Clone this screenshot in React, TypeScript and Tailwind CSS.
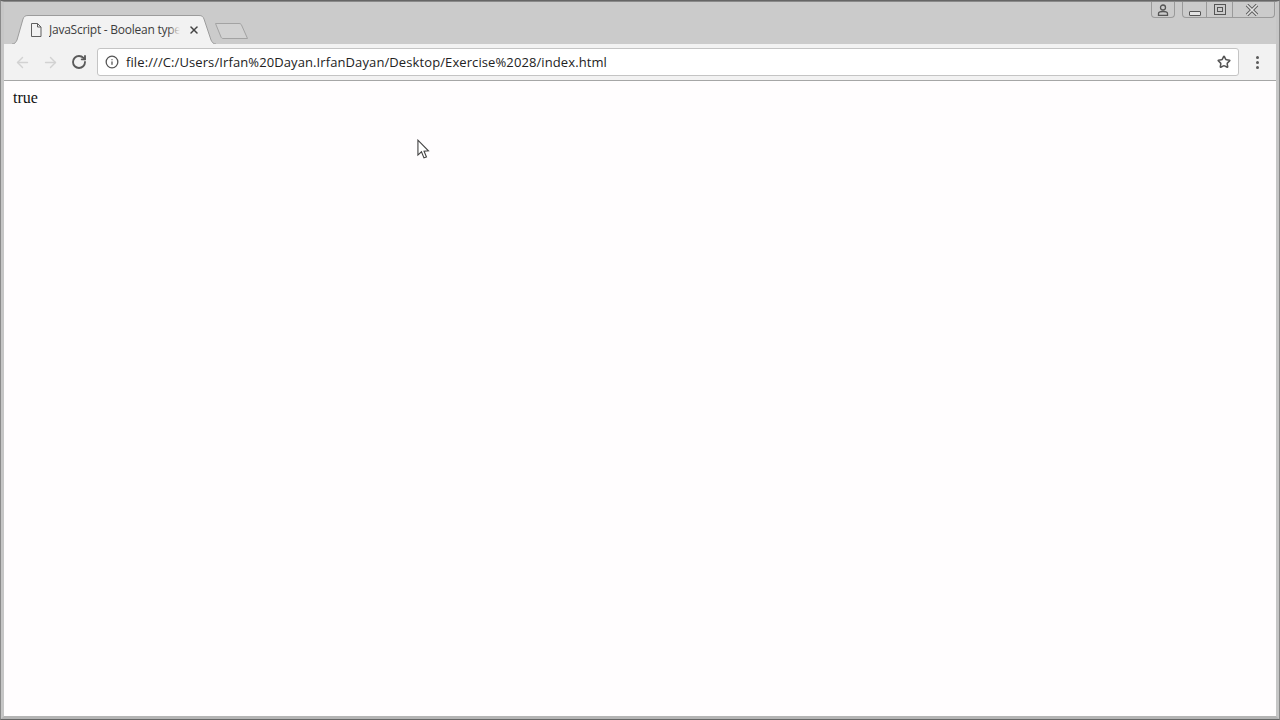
import { ArrowLeft, ArrowRight, RotateCw, Info, Star, X } from "lucide-react";

const uiFont = "font-['Open_Sans','Liberation_Sans',sans-serif]";

function Tab() {
  return (
    <div className="relative flex h-[29px] w-[204px] shrink-0 items-center pl-[18px]">
      <svg className="absolute inset-0" width="204" height="29" viewBox="0 0 204 29" fill="none">
        <path d="M0 29 C3 29 4 27 5 25 L11 4 C12 1.500 13 0.500 16 0.500 L187 0.500 C190 0.500 191 1.500 192 4 L199 25 C200 27 201 29 204 29 Z" fill="#f2f2f2" />
        <path d="M0 29 C3 29 4 27 5 25 L11 4 C12 1.500 13 0.500 16 0.500 L187 0.500 C190 0.500 191 1.500 192 4 L199 25 C200 27 201 29 204 29" stroke="#9c9c9c" />
      </svg>
      <svg className="relative shrink-0" width="12" height="14" viewBox="0 0 12 14" fill="none" stroke="#5f5f5f">
        <path d="M1.500 0.500 H7.500 L11 4 V13.500 H1.500 Z M7.500 0.500 V4 H11" />
      </svg>
      <div className={`relative ml-[7px] w-[131px] overflow-hidden whitespace-nowrap text-[12px] leading-[14px] tracking-[-0.25px] text-[#3c3c3c] ${uiFont}`}>
        JavaScript - Boolean type
        <div className="absolute inset-y-0 right-0 w-3 bg-gradient-to-r from-transparent to-[#f2f2f2]" />
      </div>
      <X className="relative ml-[8px] text-[#444444]" size={12} strokeWidth={3} />
    </div>
  );
}

function NewTabButton() {
  return (
    <svg className="mb-[4px] ml-[-2px] shrink-0" width="36" height="18" viewBox="0 0 36 18" fill="none">
      <path d="M1.500 1.500 L25 1.500 C26.500 1.500 27 2 27.500 3 L33.500 16.500 L9 16.500 C8 16.500 7.500 16 7 15 Z" fill="#d2d2d2" stroke="#a3a3a3" />
    </svg>
  );
}

function CloseGlyph() {
  return (
    <svg width="14" height="12" viewBox="0 0 14 12" fill="none">
      <path d="M2 1 L12 11 M12 1 L2 11" stroke="#5a5a5a" strokeWidth="3.400" />
      <path d="M2 1 L12 11 M12 1 L2 11" stroke="#e2e2e2" strokeWidth="1.600" />
    </svg>
  );
}

function WindowControls() {
  return (
    <div className="ml-auto flex items-start self-start">
      <div className="mr-[7px] flex h-[16px] w-[24px] items-center justify-center rounded-b-[4px] border-x border-b border-[#9a9a9a]">
        <svg width="12" height="12" viewBox="0 0 12 12" fill="none" stroke="#555555" strokeWidth="1.300">
          <circle cx="6" cy="3.500" r="2.500" />
          <path d="M1.500 11.300 V9.500 C1.500 8.200 3 7.500 6 7.500 C9 7.500 10.500 8.200 10.500 9.500 V11.300 Z" />
        </svg>
      </div>
      <div className="flex h-[16px] rounded-b-[4px] border-x border-b border-[#9a9a9a]">
        <div className="flex w-[24px] items-end justify-center border-r border-[#9a9a9a] pb-[1px]">
          <div className="h-[5px] w-[12px] rounded-[1px] border border-[#555555] bg-[#e4e4e4]" />
        </div>
        <div className="flex w-[26px] items-center justify-center border-r border-[#9a9a9a]">
          <div className="flex h-[11px] w-[12px] items-center justify-center border border-[#555555]">
            <div className="h-[5px] w-[6px] border border-[#555555]" />
          </div>
        </div>
        <div className="flex w-[41px] items-center justify-center pr-[3px]">
          <CloseGlyph />
        </div>
      </div>
    </div>
  );
}

function Toolbar() {
  return (
    <div className="flex h-[37px] items-center border-b border-[#a6a6a6] bg-[#f2f2f2]">
      <ArrowLeft className="ml-[10px] text-[#d2d2d2]" size={17} strokeWidth={2} />
      <ArrowRight className="ml-[11px] text-[#d2d2d2]" size={17} strokeWidth={2} />
      <RotateCw className="ml-[12px] text-[#5a5a5a]" size={16} strokeWidth={2.8} />
      <div className="ml-[10px] flex h-[28px] w-[1142px] items-center rounded-[3px] border border-[#c4c4c4] bg-white pl-[7px] pr-[7px]">
        <Info className="text-[#555555]" size={14} strokeWidth={2.2} />
        <span className={`ml-[7px] text-[13px] leading-[16px] tracking-[0.1px] text-[#222222] ${uiFont}`}>
          file:///C:/Users/Irfan%20Dayan.IrfanDayan/Desktop/Exercise%2028/index.html
        </span>
        <Star className="ml-auto text-[#555555]" size={14} strokeWidth={2.6} />
      </div>
      <div className="ml-[17px] flex flex-col gap-[2px]">
        <div className="size-[3px] rounded-full bg-[#5a5a5a]" />
        <div className="size-[3px] rounded-full bg-[#5a5a5a]" />
        <div className="size-[3px] rounded-full bg-[#5a5a5a]" />
      </div>
    </div>
  );
}

export default function App() {
  return (
    <div className="h-[720px] w-[1280px] overflow-hidden border border-x-[#8a8a8a] border-b-[#666666] border-t-[#666666]">
      <div className="flex h-full flex-col border-x-[3px] border-b-[3px] border-t border-x-[#c6c6c6] border-b-[#b4b4b4] border-t-[#8a8a8a] bg-[#cbcbcb]">
        <div className="flex h-[42px] shrink-0 items-end pl-[8px] pr-[1px]">
          <Tab />
          <NewTabButton />
          <WindowControls />
        </div>
        <Toolbar />
        <main className="relative flex-1 bg-[#fffdfe] px-[9px] pt-[8px] font-['Liberation_Serif',serif] text-[16px] leading-[18px] text-[#111111]">
          true
          <svg className="absolute left-[413px] top-[58px]" width="13" height="21" viewBox="0 0 14 22" fill="#ffffff" stroke="#444444" strokeWidth="1.200">
            <path d="M1 1 L1 17 L4.800 13.500 L7.500 20 L10.200 19 L7.600 12.800 L12.300 12.500 Z" />
          </svg>
        </main>
      </div>
    </div>
  );
}
